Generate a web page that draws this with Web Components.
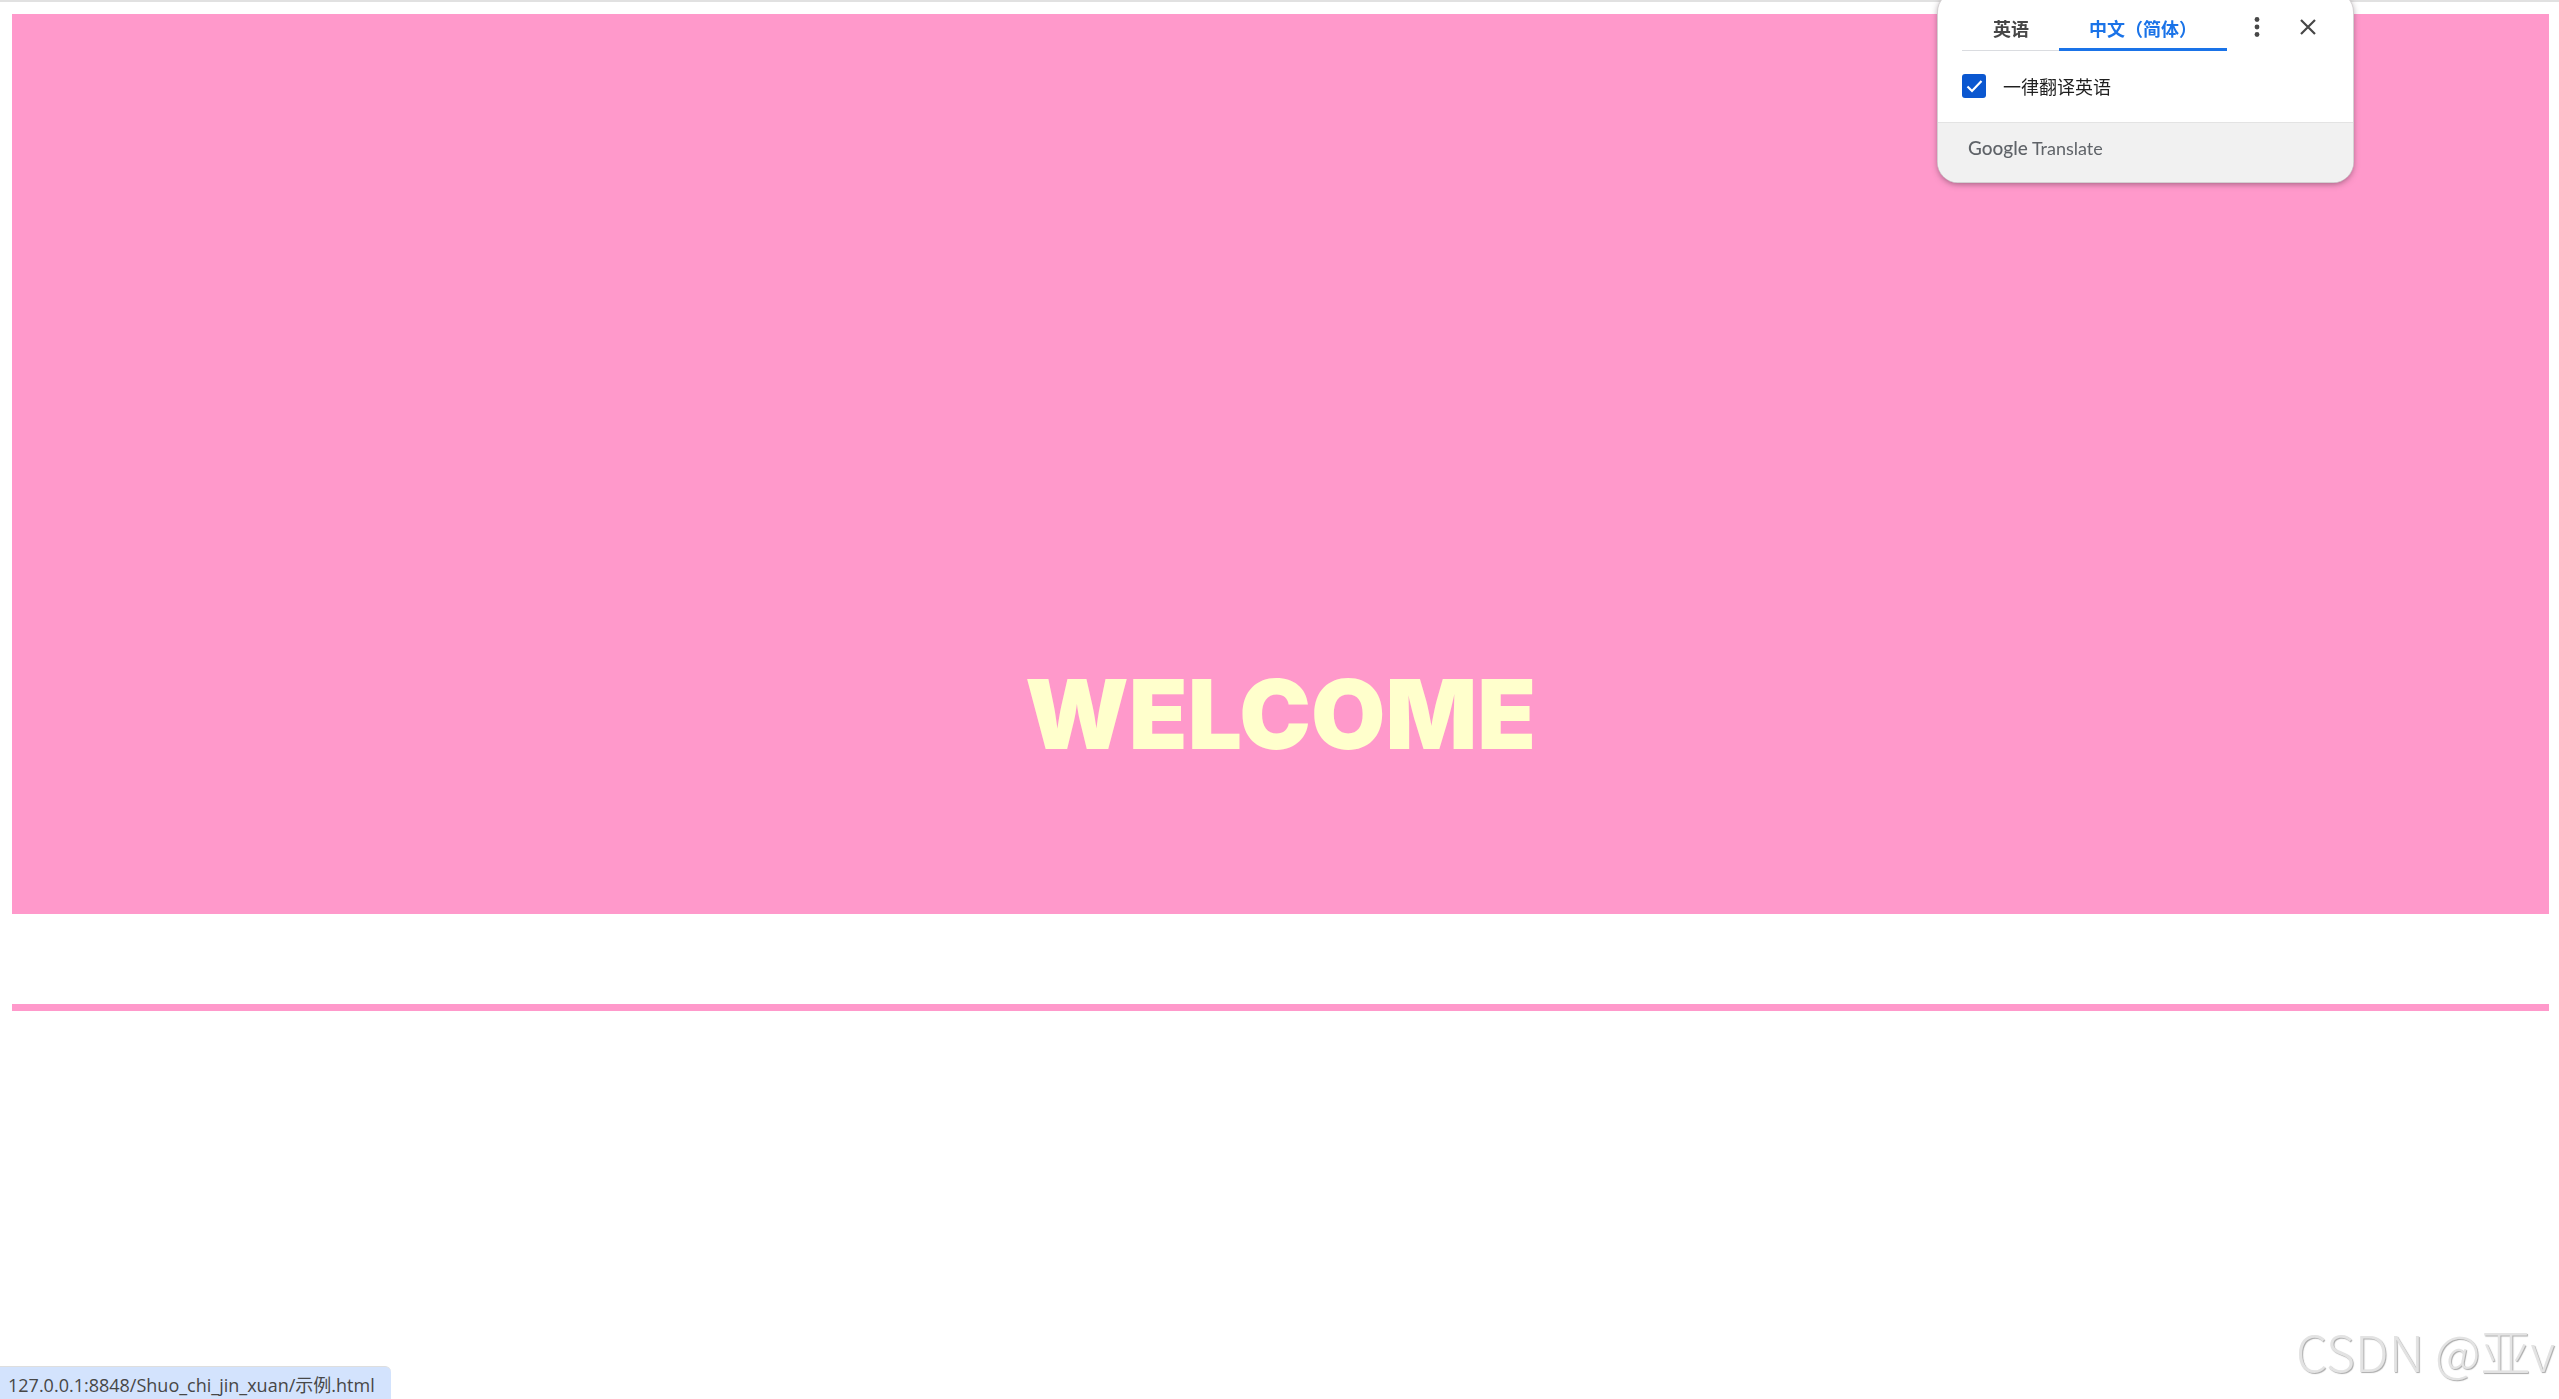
<!DOCTYPE html>
<html lang="zh-CN">
<head>
<meta charset="utf-8">
<title>示例</title>
<style>
html { height: 100%; }
body { margin: 0; background: #fff; font-family: "Liberation Sans", "Noto Sans CJK SC", sans-serif; }
</style>
</head>
<body>
<welcome-page>
  <welcome-banner>WELCOME</welcome-banner>
  <page-rule></page-rule>
</welcome-page>
<translate-bubble></translate-bubble>
<status-bubble>127.0.0.1:8848/Shuo_chi_jin_xuan/示例.html</status-bubble>
<water-mark>CSDN @亚v</water-mark>
<script>
const define = (name, html) => customElements.define(name, class extends HTMLElement {
  constructor() {
    super();
    this.attachShadow({ mode: "open" }).innerHTML = html;
  }
});

define("welcome-page", `
<style>
:host { display: flex; flex-direction: column; gap: 90px; padding: 12px 10px 12px 12px; border-top: 2px solid #e1e1e1; }
</style>
<slot></slot>`);

define("welcome-banner", `
<style>
:host { display: flex; justify-content: center; align-items: flex-end; height: 900px; box-sizing: border-box; padding-bottom: 140px; background: #ff99cb; }
h1 { margin: 0; font: 900 96px/120px Inter, "Liberation Sans", sans-serif; color: #ffffcc; }
</style>
<h1><slot></slot></h1>`);

define("page-rule", `
<style>
:host { display: block; }
hr { margin: 0; border: 0; height: 7px; background: #ff99cb; }
</style>
<hr>`);

define("translate-bubble", `
<style>
:host { display: block; position: fixed; top: -8px; right: 206px; width: 415px; border-radius: 20px; overflow: hidden; background: #fff; box-shadow: 0 0 0 1px #d4d0d2, 0 2px 6px rgba(60,40,50,.5); font-family: "Noto Sans CJK SC", sans-serif; font-size: 18px; color: #1f1f1f; }
.head { display: flex; padding: 8px 24px 0; }
.tabs { display: flex; height: 51px; }
button { font: inherit; margin: 0; padding: 0; border: 0; background: none; color: #474747; }
.tabs button { font-weight: 700; box-sizing: border-box; height: 51px; padding: 5px 30px 0 31px; border-bottom: 1px solid #dadce0; }
.tabs button[aria-selected=true] { color: #1a73e8; border-bottom: 3px solid #1a73e8; padding: 7px 30px 0; }
.icons { display: flex; gap: 27px; margin-left: 18px; height: 51px; box-sizing: border-box; padding-top: 3px; align-items: center; }
.icons button { display: flex; }
label { display: flex; align-items: center; gap: 17px; padding: 23px 24px 24px; line-height: 24px; }
.tick { display: grid; }
.tick > * { grid-area: 1 / 1; }
input { appearance: none; margin: 0; width: 24px; height: 24px; border-radius: 3px; background: #0b57d0; }
footer { height: 60px; box-sizing: border-box; padding: 12px 30px 0; background: #f1f1f1; border-top: 1px solid #e3e3e3; color: #5f6368; font: 18px/26px Lato, sans-serif; }
b { font-weight: 500; font-size: 19px; }
</style>
<div class="head">
  <div class="tabs" role="tablist">
    <button role="tab" aria-selected="false">英语</button>
    <button role="tab" aria-selected="true">中文（简体）</button>
  </div>
  <div class="icons">
    <button aria-label="更多选项"><svg width="24" height="24" fill="#474747"><circle cx="12" cy="4.500" r="2.400"/><circle cx="12" cy="12" r="2.400"/><circle cx="12" cy="19.500" r="2.400"/></svg></button>
    <button aria-label="关闭"><svg width="24" height="24" stroke="#474747" stroke-width="2.200"><path d="M5 5L19 19M19 5L5 19"/></svg></button>
  </div>
</div>
<label for="always">
  <span class="tick"><input id="always" type="checkbox" checked><svg width="24" height="24" fill="none" stroke="#fff" stroke-width="2.200"><path d="M5.500 12.500L10 17L19.500 7"/></svg></span>
  <span>一律翻译英语</span>
</label>
<footer><b>Google</b> Translate</footer>`);

define("status-bubble", `
<style>
:host { display: block; position: fixed; left: 0; bottom: 0; height: 33px; box-sizing: border-box; padding: 0 16px 0 8px; border-top: 1px solid #dedede; border-radius: 0 6px 0 0; background: #d3e3fd; color: #474747; font: 18px/36px "Open Sans", "Noto Sans CJK SC", sans-serif; white-space: nowrap; }
</style>
<slot></slot>`);

define("water-mark", `
<style>
:host { display: block; position: fixed; right: 0; bottom: 14px; padding-right: 4px; white-space: nowrap; font: 300 50px/70px "Noto Sans CJK SC", sans-serif; color: #e3e3e3; text-shadow: 1px 1px 1px #aaa; }
</style>
<slot></slot>`);
</script>
</body>
</html>
